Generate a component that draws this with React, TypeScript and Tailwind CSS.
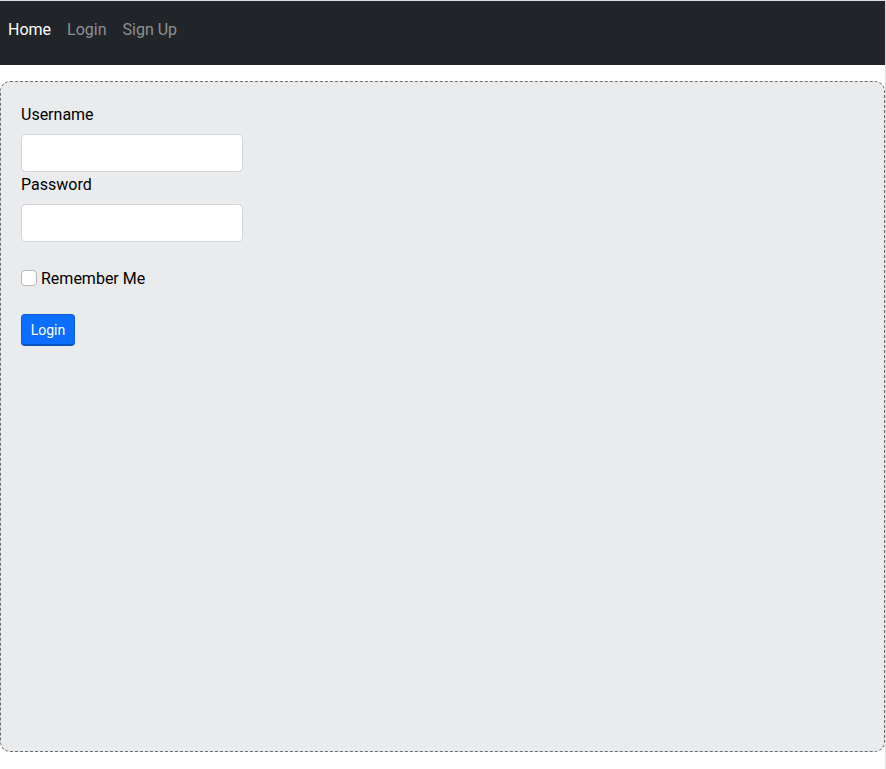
const links = [
  { label: "Home", active: true },
  { label: "Login", active: false },
  { label: "Sign Up", active: false },
];

export default function App() {
  return (
    <div className="min-h-[769px] bg-white border-t border-r border-[#dcdcdc] font-['Roboto',sans-serif] text-base text-black">
      {/* ── Navbar ── */}
      <nav className="h-16 bg-[#212529] px-2 pt-4">
        <ul className="flex gap-4 h-6 leading-[26px]">
          {links.map((l) => (
            <li key={l.label}>
              <a
                href="#"
                className={l.active ? "text-white" : "text-[#8f9194]"}
              >
                {l.label}
              </a>
            </li>
          ))}
        </ul>
      </nav>

      {/* ── Login form box ── */}
      <div className="mt-4 h-[671px] rounded-[10px] border border-dashed border-[#6c6c6c] bg-[#eaebed] p-5">
        <form className="flex flex-col items-start">
          <label className="h-6 leading-[26px]">Username</label>
          <input
            type="text"
            className="mt-2 h-[38px] w-[222px] rounded-[5px] border border-[#d3d5d8] bg-white px-3 outline-none"
          />
          <label className="h-6 leading-[26px]">Password</label>
          <input
            type="password"
            className="mt-2 h-[38px] w-[222px] rounded-[5px] border border-[#d3d5d8] bg-white px-3 outline-none"
          />
          <label className="mt-6 flex h-6 items-start gap-1">
            <span className="mt-1 inline-block h-4 w-4 rounded-[4px] border border-[#b5b7ba] bg-white" />
            <span className="leading-[26px]">Remember Me</span>
          </label>
          <button
            type="button"
            className="mt-6 h-8 w-[54px] rounded-[4px] border border-[#0b5ed7] border-b-2 border-b-[#0a53be] bg-[#0d6efd] text-sm text-white"
          >
            Login
          </button>
        </form>
      </div>
    </div>
  );
}
